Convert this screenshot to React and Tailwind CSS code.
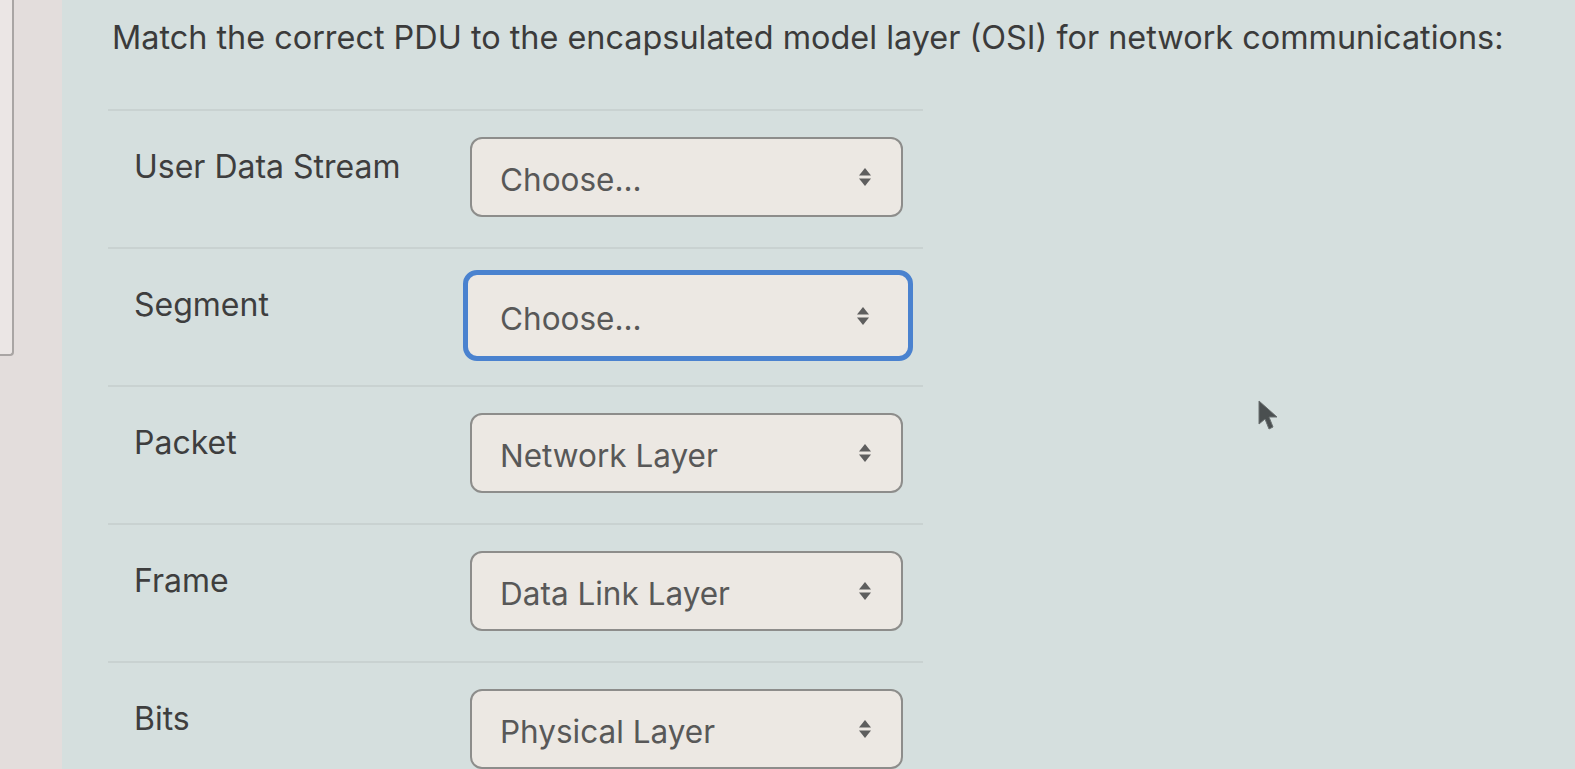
import React from 'react';

const rows = [
  { label: 'User Data Stream', value: 'Choose...' },
  { label: 'Segment', value: 'Choose...', focused: true },
  { label: 'Packet', value: 'Network Layer' },
  { label: 'Frame', value: 'Data Link Layer' },
  { label: 'Bits', value: 'Physical Layer' },
];

function Arrows() {
  return (
    <svg width="16" height="22" viewBox="0 0 16 22" className="shrink-0">
      <path d="M8 2 L14 9.5 H2 Z" fill="#5e5e5e" />
      <path d="M8 20 L14 12.5 H2 Z" fill="#5e5e5e" />
    </svg>
  );
}

function Select({ value, focused }) {
  return (
    <div
      className={
        focused
          ? 'flex items-center justify-between h-[91px] w-[450px] -ml-[7px] -mt-[5px] rounded-[14px] border-[5px] border-[#4a82cf] bg-[#ece8e3] pl-[32px] pr-[37px]'
          : 'flex items-center justify-between h-[80px] w-[433px] rounded-[12px] border-2 border-[#8d8d8b] bg-[#ece8e3] pl-[28px] pr-[28px]'
      }
    >
      <span className="text-[31.5px] text-[#585858] pt-[6px]">{value}</span>
      <Arrows />
    </div>
  );
}

export default function App() {
  return (
    <div
      className="relative flex w-[1575px] h-[769px] overflow-hidden bg-[#d5dfde]"
      style={{ fontFamily: 'Inter, "Liberation Sans", Arial, sans-serif' }}
    >
      {/* left strip */}
      <div className="w-[62px] shrink-0 bg-[#e3dddc]">
        <div className="w-[14px] h-[356px] bg-[#ebe6e5] border-r-2 border-b-2 border-[#a9a5a4] rounded-br-[4px]" />
      </div>

      {/* main */}
      <div className="flex-1 pl-[50px] pt-[18px]">
        <h1 className="text-[32.4px] text-[#3b3b3b] leading-[40px] whitespace-nowrap">
          Match the correct PDU to the encapsulated model layer (OSI) for network communications:
        </h1>

        <div className="mt-[51px] w-[815px] -ml-[4px]">
          {rows.map((r) => (
            <div key={r.label} className="flex border-t-2 border-[#c9d2d1] h-[138px]">
              <div className="w-[362px] pl-[26px] pt-[32px] text-[32px] text-[#3e3e3e]">{r.label}</div>
              <div className="pt-[26px]">
                <Select value={r.value} focused={r.focused} />
              </div>
            </div>
          ))}
        </div>
      </div>

      {/* mouse cursor */}
      <svg className="absolute left-[1256px] top-[398px]" width="26" height="36" viewBox="0 0 26 36">
        <path d="M3 3 L3 26 L9 21 L13 31 L17 29 L13 19 L21 19 Z" fill="#4a4f50" stroke="#6a7070" strokeWidth="1" />
      </svg>
    </div>
  );
}
